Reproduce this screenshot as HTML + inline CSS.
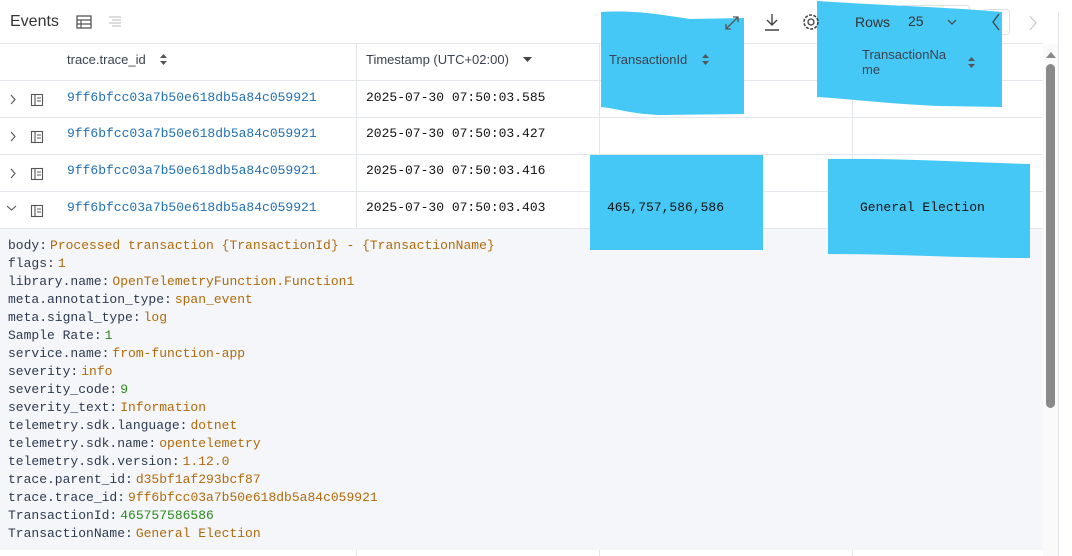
<!DOCTYPE html>
<html><head><meta charset="utf-8"><style>
*{margin:0;padding:0;box-sizing:border-box}
body{width:1072px;height:556px;overflow:hidden;background:#fff;font-family:"Liberation Sans",sans-serif;position:relative;color:#2c3440}
.abs{position:absolute}
.hline{position:absolute;left:0;width:1043px;height:1px;background:#e3e6ea}
.vline{position:absolute;width:1px;background:#e3e6ea}
.mono{font-family:"Liberation Mono",monospace;font-size:13px}
.th{position:absolute;font-size:13px;color:#3b4250}
.link{color:#1f6fb5}
.det{position:absolute;left:0;top:229px;width:1043px;height:321px;background:#f5f6f9}
.det div{height:18px;line-height:18px;white-space:pre}
.k{color:#2d3a50}.v{color:#b06a0a}.g{color:#2a8a1c}
.det span+span{margin-left:3px}
.blue{fill:#45c8f5}
</style></head><body>
<div class="abs" style="left:10px;top:13px;font-size:16px;color:#333">Events</div>
<svg class="abs" style="left:76px;top:15px" width="16" height="14" viewBox="0 0 16 14"><rect x="1" y="1" width="14" height="12" fill="none" stroke="#555" stroke-width="1.3"/><path d="M1 5H15M1 9H15M5 5V13" stroke="#555" stroke-width="1.2"/></svg>
<svg class="abs" style="left:108px;top:15px" width="14" height="14" viewBox="0 0 14 14"><path d="M1 2H13M4 5H13M1 8H13M4 11H13" stroke="#bbb" stroke-width="1"/></svg>

<svg class="abs" style="left:762px;top:12px" width="20" height="20" viewBox="0 0 20 20"><path d="M10 2V13M5 8L10 13L15 8M3 18H17" fill="none" stroke="#444" stroke-width="1.4"/></svg>
<div class="abs" style="left:839px;top:10px;width:1px;height:26px;background:#e3e6ea"></div>
<div class="abs" style="left:900px;top:5px;width:70px;height:30px;border:1px solid #dde0e4;border-radius:3px"></div>
<div class="abs" style="left:983px;top:9px;width:27px;height:26px;border:1px solid #dde0e4;border-radius:3px"></div>
<svg class="abs" style="left:1027px;top:14px" width="12" height="18"><path d="M3 2L9 9L3 16" fill="none" stroke="#ccc" stroke-width="1.2"/></svg>
<div class="abs" style="left:1058px;top:12px;width:1px;height:544px;background:#e3e6ea"></div>

<div class="hline" style="top:43px"></div>
<div class="hline" style="top:80px"></div>
<div class="hline" style="top:117px"></div>
<div class="hline" style="top:154px"></div>
<div class="hline" style="top:191px"></div>
<div class="hline" style="top:228px"></div>
<div class="vline" style="left:356px;top:43px;height:513px"></div>
<div class="vline" style="left:599px;top:43px;height:513px"></div>
<div class="vline" style="left:852px;top:43px;height:513px"></div>

<div class="th" style="left:67px;top:52px">trace.trace_id</div>
<svg class="abs" style="left:159px;top:53px" width="9" height="13"><path d="M1 5L4.5 1L8 5ZM1 8L4.5 12L8 8Z" fill="#555"/></svg>
<div class="th" style="left:366px;top:52px">Timestamp (UTC+02:00)</div>
<svg class="abs" style="left:523px;top:57px" width="9" height="6"><path d="M0 0H9L4.5 5Z" fill="#444"/></svg>

<div class="abs mono link" style="left:67px;top:90px">9ff6bfcc03a7b50e618db5a84c059921</div>
<div class="abs mono link" style="left:67px;top:126px">9ff6bfcc03a7b50e618db5a84c059921</div>
<div class="abs mono link" style="left:67px;top:163px">9ff6bfcc03a7b50e618db5a84c059921</div>
<div class="abs mono link" style="left:67px;top:200px">9ff6bfcc03a7b50e618db5a84c059921</div>
<div class="abs mono" style="left:366px;top:90px;color:#111">2025-07-30 07:50:03.585</div>
<div class="abs mono" style="left:366px;top:126px;color:#111">2025-07-30 07:50:03.427</div>
<div class="abs mono" style="left:366px;top:163px;color:#111">2025-07-30 07:50:03.416</div>
<div class="abs mono" style="left:366px;top:200px;color:#111">2025-07-30 07:50:03.403</div>
<svg class="abs" style="left:4px;top:90px" width="40" height="130">
<g fill="none" stroke="#555" stroke-width="1.1">
<path d="M7 5L11 9.5L7 14"/><path d="M7 42L11 46.5L7 51"/><path d="M7 79L11 83.5L7 88"/><path d="M3 116L7.5 120L12 116"/>
<g transform="translate(27,4)"><rect x="0.5" y="0.5" width="11" height="11"/><path d="M4 1V11M6 4H10M6 7H10"/></g>
<g transform="translate(27,41)"><rect x="0.5" y="0.5" width="11" height="11"/><path d="M4 1V11M6 4H10M6 7H10"/></g>
<g transform="translate(27,78)"><rect x="0.5" y="0.5" width="11" height="11"/><path d="M4 1V11M6 4H10M6 7H10"/></g>
<g transform="translate(27,115)"><rect x="0.5" y="0.5" width="11" height="11"/><path d="M4 1V11M6 4H10M6 7H10"/></g>
</g></svg>

<div class="det mono" style="padding:8px 0 0 8px">
<div><span class="k">body:</span><span class="v">Processed transaction {TransactionId} - {TransactionName}</span></div>
<div><span class="k">flags:</span><span class="v">1</span></div>
<div><span class="k">library.name:</span><span class="v">OpenTelemetryFunction.Function1</span></div>
<div><span class="k">meta.annotation_type:</span><span class="v">span_event</span></div>
<div><span class="k">meta.signal_type:</span><span class="v">log</span></div>
<div><span class="k">Sample Rate:</span><span class="g">1</span></div>
<div><span class="k">service.name:</span><span class="v">from-function-app</span></div>
<div><span class="k">severity:</span><span class="v">info</span></div>
<div><span class="k">severity_code:</span><span class="g">9</span></div>
<div><span class="k">severity_text:</span><span class="v">Information</span></div>
<div><span class="k">telemetry.sdk.language:</span><span class="v">dotnet</span></div>
<div><span class="k">telemetry.sdk.name:</span><span class="v">opentelemetry</span></div>
<div><span class="k">telemetry.sdk.version:</span><span class="v">1.12.0</span></div>
<div><span class="k">trace.parent_id:</span><span class="v">d35bf1af293bcf87</span></div>
<div><span class="k">trace.trace_id:</span><span class="v">9ff6bfcc03a7b50e618db5a84c059921</span></div>
<div><span class="k">TransactionId:</span><span class="g">465757586586</span></div>
<div><span class="k">TransactionName:</span><span class="v">General Election</span></div>
</div>

<div class="abs" style="left:1043px;top:44px;width:15px;height:512px;background:#fafafa"></div>
<svg class="abs" style="left:1045px;top:51px" width="12" height="8"><path d="M1 7L6 1L11 7Z" fill="#888"/></svg>
<div class="abs" style="left:1046px;top:64px;width:9px;height:344px;background:#8a8a8a;border-radius:5px"></div>

<svg class="abs" style="left:0;top:0" width="1072" height="556">
<path class="blue" d="M601 12C640 10 660 15 690 19L744 18L744 114L660 115C630 114 615 108 601 107Z"/>
<path class="blue" d="M817 1L850 3C900 6 960 8 1002 12L1002 107L940 106C890 104 850 99 817 97Z"/>
<path class="blue" d="M590 155L763 155L763 250L590 250Z"/>
<path class="blue" d="M828 159C900 158 960 162 1030 164L1030 258C960 258 900 254 828 254Z"/>
</svg>
<div class="th" style="left:609px;top:52px">TransactionId</div>
<svg class="abs" style="left:701px;top:53px" width="9" height="13"><path d="M1 5L4.5 1L8 5ZM1 8L4.5 12L8 8Z" fill="#555"/></svg>
<div class="th" style="left:862px;top:47px;line-height:15px">TransactionNa<br>me</div>
<svg class="abs" style="left:967px;top:56px" width="9" height="13"><path d="M1 5L4.5 1L8 5ZM1 8L4.5 12L8 8Z" fill="#555"/></svg>
<svg class="abs" style="left:723px;top:14px" width="18" height="18" viewBox="0 0 18 18"><path d="M3 15L15 3M10 3H15V8M3 10V15H8" fill="none" stroke="#555" stroke-width="1.3"/></svg>
<svg class="abs" style="left:801px;top:12px" width="20" height="20" viewBox="0 0 20 20"><circle cx="10" cy="10" r="3" fill="none" stroke="#444" stroke-width="1.3"/><circle cx="10" cy="10" r="7" fill="none" stroke="#444" stroke-width="1.6" stroke-dasharray="3 1.4"/></svg>
<div class="abs" style="left:855px;top:14px;font-size:14px;color:#333">Rows</div>
<div class="abs" style="left:908px;top:13px;font-size:14px;color:#333">25</div>
<svg class="abs" style="left:946px;top:17px" width="12" height="10"><path d="M2 3L6 7L10 3" fill="none" stroke="#444" stroke-width="1.2"/></svg>
<svg class="abs" style="left:990px;top:12px" width="12" height="20"><path d="M9 2L3 10L9 18" fill="none" stroke="#444" stroke-width="1.3"/></svg>
<div class="abs mono" style="left:607px;top:200px;color:#111">465,757,586,586</div>
<div class="abs mono" style="left:860px;top:200px;color:#111">General Election</div>
</body></html>
